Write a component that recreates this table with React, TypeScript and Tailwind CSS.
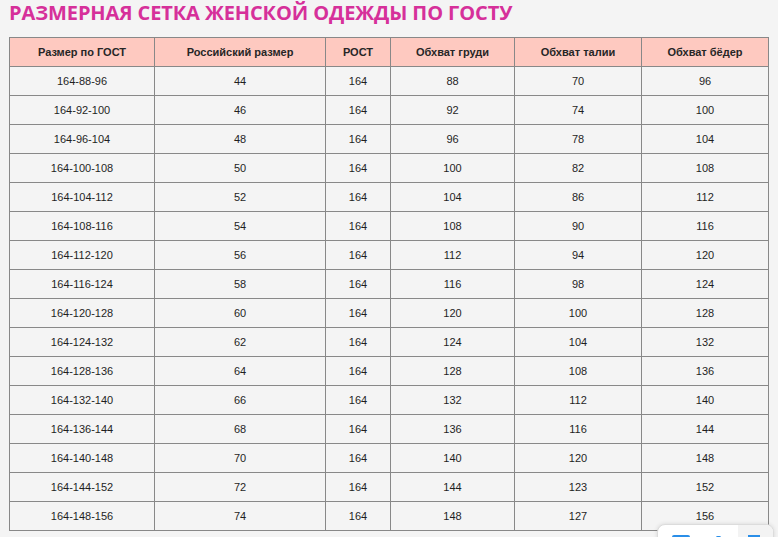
import React from "react";

const rows: [string, number, number, number, number, number][] = [
  ["164-88-96", 44, 164, 88, 70, 96],
  ["164-92-100", 46, 164, 92, 74, 100],
  ["164-96-104", 48, 164, 96, 78, 104],
  ["164-100-108", 50, 164, 100, 82, 108],
  ["164-104-112", 52, 164, 104, 86, 112],
  ["164-108-116", 54, 164, 108, 90, 116],
  ["164-112-120", 56, 164, 112, 94, 120],
  ["164-116-124", 58, 164, 116, 98, 124],
  ["164-120-128", 60, 164, 120, 100, 128],
  ["164-124-132", 62, 164, 124, 104, 132],
  ["164-128-136", 64, 164, 128, 108, 136],
  ["164-132-140", 66, 164, 132, 112, 140],
  ["164-136-144", 68, 164, 136, 116, 144],
  ["164-140-148", 70, 164, 140, 120, 148],
  ["164-144-152", 72, 164, 144, 123, 152],
  ["164-148-156", 74, 164, 148, 127, 156],
];

const headers = [
  "Размер по ГОСТ",
  "Российский размер",
  "РОСТ",
  "Обхват груди",
  "Обхват талии",
  "Обхват бёдер",
];

export default function App() {
  return (
    <div className="relative h-[537px] w-[778px] overflow-hidden bg-[#f4f4f4] pl-[9px] font-['Liberation_Sans',Arial,sans-serif]">
      <h1 className="h-[26px] text-[20px] leading-[26px] font-bold text-[#d6309a] font-['Open_Sans',sans-serif] tracking-[-0.1px]">
        РАЗМЕРНАЯ СЕТКА ЖЕНСКОЙ ОДЕЖДЫ ПО ГОСТУ
      </h1>
      <div className="mt-[11px] grid w-[760px] grid-cols-[145px_171px_65px_124px_127px_127px] border-l border-t border-[#888888] text-[11px] text-[#1f1f1f]">
        {headers.map((h) => (
          <div
            key={h}
            className="flex h-[29px] items-center justify-center border-b border-r border-[#888888] bg-[#fec9c0] font-bold text-[#262626]"
          >
            {h}
          </div>
        ))}
        {rows.map((r) =>
          r.map((v, i) => (
            <div
              key={r[0] + "-" + i}
              className="flex h-[29px] items-center justify-center border-b border-r border-[#888888]"
            >
              {v}
            </div>
          ))
        )}
      </div>
      <div className="absolute left-[657px] top-[524px] flex h-[40px] w-[117px] overflow-hidden rounded-t-[8px] border border-[#dcdcdc] bg-white shadow-[0_0_4px_rgba(0,0,0,0.12)]">
        <div className="flex w-[80px] items-start gap-[26px] pl-[14px] pt-[10px]">
          <div className="h-[4px] w-[18px] rounded-full bg-[#2a8ee8]" />
          <div className="mt-[1px] h-[3px] w-[5px] rounded-full bg-[#2a8ee8]" />
        </div>
        <div className="flex flex-1 items-start bg-[#f3f3f3] pl-[10px] pt-[10px]">
          <div className="h-[3px] w-[12px] bg-[#2a8ee8]" />
        </div>
      </div>
    </div>
  );
}
